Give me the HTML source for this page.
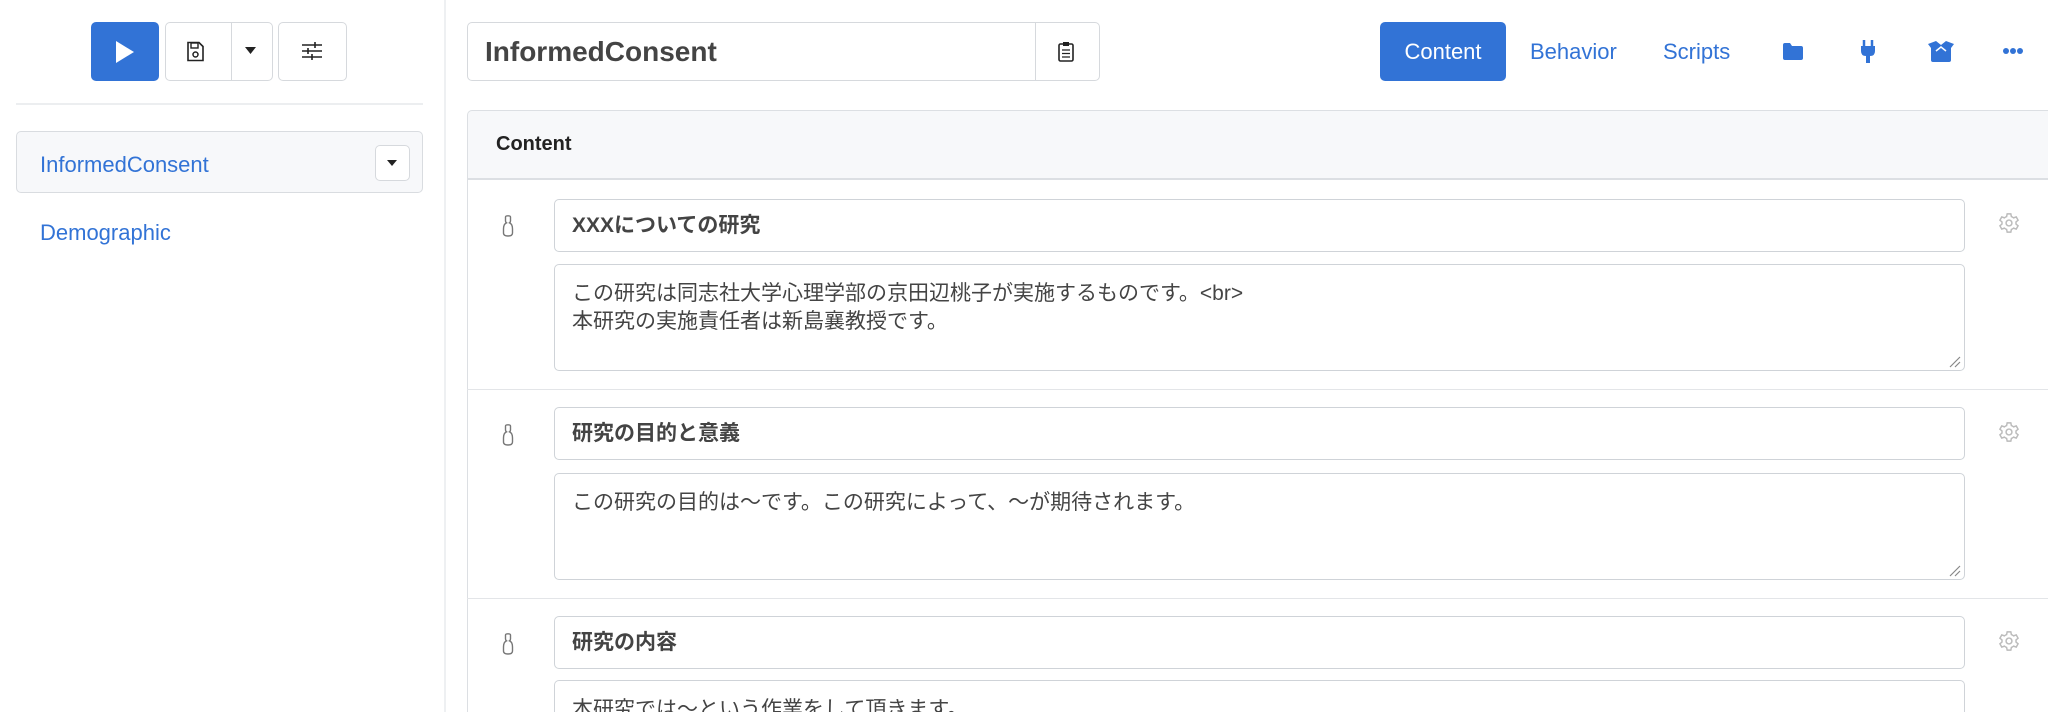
<!DOCTYPE html>
<html style="width:2048px;height:712px;overflow:hidden"><head><meta charset="utf-8"><style>
*{box-sizing:border-box;margin:0;padding:0}
body{width:2048px;height:712px;overflow:hidden;background:#fff;font-family:"Liberation Sans","Noto Sans CJK JP",sans-serif;color:#444;position:relative}
.a{position:absolute}
.btn{position:absolute;border:1px solid #d6d9dd;border-radius:5px;background:#fff}
.blue{color:#3273d6}
.inp{position:absolute;left:554px;width:1411px;border:1px solid #cfd3d8;border-radius:5px;background:#fff;font-size:21px;padding-left:17px}
.ttl{height:53px;line-height:51px;font-weight:bold;color:#444}
.ta{height:107px;padding-top:15px;line-height:28px;color:#444}
.sep{position:absolute;left:467px;width:1581px;height:1px;background:#e3e5e8}
.grip{position:absolute;left:502px;width:12px;height:22px}
.gear{position:absolute;left:1998px;width:22px;height:22px}
</style></head><body>
<div class="a" style="left:444px;top:0;width:2px;height:712px;background:#eef0f2"></div>
<div class="a" style="left:91px;top:22px;width:68px;height:59px;background:#3273d6;border-radius:5px"></div>
<svg class="a" style="left:114px;top:40px" width="22" height="24"><path d="M2 1 L20 12 L2 23 Z" fill="#fff"/></svg>
<div class="btn" style="left:165px;top:22px;width:108px;height:59px"></div>
<div class="a" style="left:231px;top:22px;width:1px;height:59px;background:#d6d9dd"></div>
<svg class="a" style="left:186px;top:41px" width="20" height="21"><path d="M2 1.5H13L17 5.5V19.5H2Z" fill="none" stroke="#222" stroke-width="1.6"/><rect x="5" y="2" width="7" height="5" fill="none" stroke="#222" stroke-width="1.4"/><circle cx="9.5" cy="13.5" r="2.5" fill="none" stroke="#222" stroke-width="1.5"/></svg>
<svg class="a" style="left:245px;top:47px" width="12" height="8"><path d="M0 0H11L5.5 7Z" fill="#222"/></svg>
<div class="btn" style="left:278px;top:22px;width:69px;height:59px"></div>
<svg class="a" style="left:301px;top:40px" width="22" height="22"><g stroke="#222" stroke-width="1.6"><path d="M1 5H21M1 11H21M1 17H21"/><path d="M14 2V8M7 8V14M11 14V20"/></g></svg>
<div class="a" style="left:16px;top:103px;width:407px;height:2px;background:#eceef0"></div>
<div class="a" style="left:16px;top:131px;width:407px;height:62px;background:#f7f8fa;border:1px solid #d9dce0;border-radius:5px"></div>
<div class="a blue" style="left:40px;top:152px;font-size:22px">InformedConsent</div>
<div class="btn" style="left:375px;top:145px;width:35px;height:36px"></div>
<svg class="a" style="left:387px;top:160px" width="11" height="7"><path d="M0 0H10L5 6Z" fill="#222"/></svg>
<div class="a blue" style="left:40px;top:220px;font-size:22px">Demographic</div>
<div class="btn" style="left:467px;top:22px;width:633px;height:59px"></div>
<div class="a" style="left:1035px;top:22px;width:1px;height:59px;background:#d6d9dd"></div>
<div class="a" style="left:485px;top:36px;font-size:28px;font-weight:bold;color:#444">InformedConsent</div>
<svg class="a" style="left:1058px;top:41px" width="16" height="22"><rect x="1" y="3" width="14" height="17" rx="1.5" fill="none" stroke="#222" stroke-width="1.6"/><rect x="5" y="1" width="6" height="4" fill="#222"/><path d="M4 9H12M4 12.5H12M4 16H12" stroke="#222" stroke-width="1.3"/></svg>
<div class="a" style="left:1380px;top:22px;width:126px;height:59px;background:#3273d6;border-radius:5px;color:#fff;font-size:22px;line-height:59px;text-align:center">Content</div>
<div class="a blue" style="left:1530px;top:39px;font-size:22px">Behavior</div>
<div class="a blue" style="left:1663px;top:39px;font-size:22px">Scripts</div>
<svg class="a" style="left:1783px;top:43px" width="20" height="17"><path d="M0 2Q0 0 2 0H7L9 3H18Q20 3 20 5V15Q20 17 18 17H2Q0 17 0 15Z" fill="#3273d6"/></svg>
<svg class="a" style="left:1860px;top:40px" width="16" height="24"><path d="M4 0V6M12 0V6" stroke="#3273d6" stroke-width="2.5"/><path d="M1 6H15V11Q15 16 10 16V23H6V16Q1 16 1 11Z" fill="#3273d6"/></svg>
<svg class="a" style="left:1928px;top:41px" width="26" height="21"><path d="M3 7H23V19Q23 21 21 21H5Q3 21 3 19Z M0 3L8 0L13 4L18 0L26 3L23 7L13 11L3 7Z" fill="#3273d6"/><path d="M8 10L13 6L18 10" stroke="#fff" stroke-width="1.5" fill="none"/></svg>
<svg class="a" style="left:2003px;top:47px" width="20" height="8"><circle cx="3" cy="4" r="3" fill="#3273d6"/><circle cx="10" cy="4" r="3" fill="#3273d6"/><circle cx="17" cy="4" r="3" fill="#3273d6"/></svg>
<div class="a" style="left:467px;top:110px;width:1581px;height:70px;background:#f7f8fa;border:1px solid #dcdfe3;border-right:none;border-bottom:2px solid #dcdfe3;border-radius:5px 0 0 0"></div>
<div class="a" style="left:496px;top:133px;font-size:20px;font-weight:bold;color:#222">Content</div>
<div class="a" style="left:467px;top:180px;width:1px;height:532px;background:#dcdfe3"></div>

<svg width="0" height="0" style="position:absolute"><defs>
<symbol id="g" viewBox="0 0 12 22"><path d="M3.5 2Q3.5 0.8 6 0.8Q8.5 0.8 8.5 2V6Q8.5 7 7.5 7.8Q10.5 9 10.5 14V18Q10.5 21 6 21Q1.5 21 1.5 18V14Q1.5 9 4.5 7.8Q3.5 7 3.5 6Z" fill="none" stroke="#777" stroke-width="1.4"/></symbol>
<symbol id="c" viewBox="0 0 24 24"><g fill="none" stroke="#bbb" stroke-width="1.6"><path d="M10 2H14L14.6 5A7.5 7.5 0 0 1 17 6.4L19.9 5.4L21.9 8.9L19.6 10.9A7.5 7.5 0 0 1 19.6 13.1L21.9 15.1L19.9 18.6L17 17.6A7.5 7.5 0 0 1 14.6 19L14 22H10L9.4 19A7.5 7.5 0 0 1 7 17.6L4.1 18.6L2.1 15.1L4.4 13.1A7.5 7.5 0 0 1 4.4 10.9L2.1 8.9L4.1 5.4L7 6.4A7.5 7.5 0 0 1 9.4 5Z"/><circle cx="12" cy="12" r="3.2"/></g></symbol>
</defs></svg>

<svg class="grip" style="top:215px"><use href="#g"/></svg>
<svg class="gear" style="top:212px"><use href="#c"/></svg>
<div class="inp ttl" style="top:199px">XXXについての研究</div>
<div class="inp ta" style="top:264px">この研究は同志社大学心理学部の京田辺桃子が実施するものです。&lt;br&gt;<br>本研究の実施責任者は新島襄教授です。</div>
<svg class="a" style="left:1947px;top:354px" width="14" height="14"><path d="M13 3L3 13M13 8L8 13" stroke="#888" stroke-width="1.2"/></svg>
<div class="sep" style="top:389px"></div>

<svg class="grip" style="top:424px"><use href="#g"/></svg>
<svg class="gear" style="top:421px"><use href="#c"/></svg>
<div class="inp ttl" style="top:407px">研究の目的と意義</div>
<div class="inp ta" style="top:473px">この研究の目的は〜です。この研究によって、〜が期待されます。</div>
<svg class="a" style="left:1947px;top:563px" width="14" height="14"><path d="M13 3L3 13M13 8L8 13" stroke="#888" stroke-width="1.2"/></svg>
<div class="sep" style="top:598px"></div>

<svg class="grip" style="top:633px"><use href="#g"/></svg>
<svg class="gear" style="top:630px"><use href="#c"/></svg>
<div class="inp ttl" style="top:616px">研究の内容</div>
<div class="inp ta" style="top:680px;height:32px;border-bottom:none;border-radius:5px 5px 0 0;overflow:hidden">本研究では〜という作業をして頂きます。</div>
</body></html>
